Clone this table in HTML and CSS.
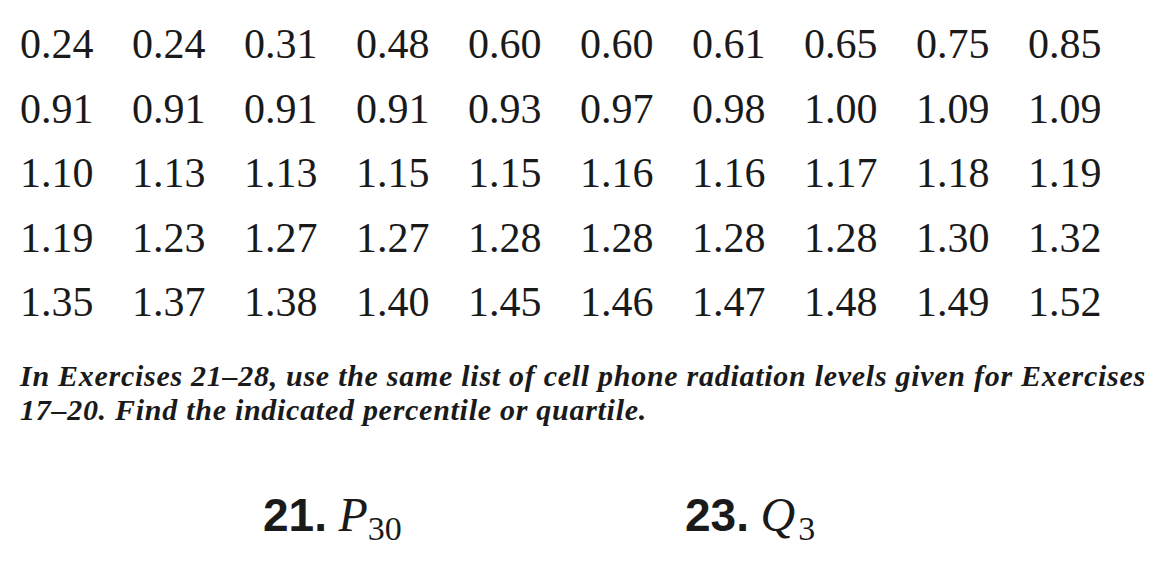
FILE: index.html
```html
<!DOCTYPE html>
<html lang="en">
<head>
    <meta charset="UTF-8">
    <title>Percentiles and Quartiles</title>
    <link rel="stylesheet" href="styles.css">
</head>
<body>
    <div class="page">
        <div class="data-table">
            <span>0.24</span><span>0.24</span><span>0.31</span><span>0.48</span><span>0.60</span>
            <span>0.60</span><span>0.61</span><span>0.65</span><span>0.75</span><span>0.85</span>
            <span>0.91</span><span>0.91</span><span>0.91</span><span>0.91</span><span>0.93</span>
            <span>0.97</span><span>0.98</span><span>1.00</span><span>1.09</span><span>1.09</span>
            <span>1.10</span><span>1.13</span><span>1.13</span><span>1.15</span><span>1.15</span>
            <span>1.16</span><span>1.16</span><span>1.17</span><span>1.18</span><span>1.19</span>
            <span>1.19</span><span>1.23</span><span>1.27</span><span>1.27</span><span>1.28</span>
            <span>1.28</span><span>1.28</span><span>1.28</span><span>1.30</span><span>1.32</span>
            <span>1.35</span><span>1.37</span><span>1.38</span><span>1.40</span><span>1.45</span>
            <span>1.46</span><span>1.47</span><span>1.48</span><span>1.49</span><span>1.52</span>
        </div>
        <p class="instructions">In Exercises 21–28, use the same list of cell phone radiation levels given for Exercises 17–20. Find the indicated percentile or quartile.</p>
        <div class="exercises">
            <div class="exercise"><span class="num">21.</span> <span class="var">P</span><sub>30</sub></div>
            <div class="exercise"><span class="num">23.</span> <span class="var">Q</span><sub class="wide">3</sub></div>
        </div>
    </div>
</body>
</html>
```

FILE: styles.css
```css
body {
    margin: 0;
    background-color: #ffffff;
    color: #1a1a1a;
    font-family: "Liberation Serif", "Times New Roman", serif;
}
.page {
    padding: 12px 0 0 20px;
}
.data-table {
    display: grid;
    grid-template-columns: repeat(10, 112px);
    font-size: 42px;
    line-height: 64.5px;
}
.instructions {
    margin: 24px 0 0;
    width: 1140px;
    font-size: 30px;
    line-height: 34px;
    letter-spacing: 0.72px;
    font-weight: bold;
    font-style: italic;
}
.exercises {
    display: grid;
    grid-template-columns: 422px auto;
    margin-top: 60px;
    padding-left: 243px;
}
.exercise {
    font-size: 46px;
    line-height: 56px;
}
.exercise .num {
    font-family: "Liberation Sans", Arial, sans-serif;
    font-weight: bold;
}
.exercise .var {
    font-size: 48px;
    font-style: italic;
}
.exercise sub {
    font-size: 34px;
    vertical-align: -9px;
    line-height: 0;
}
.exercise sub.wide {
    margin-left: 3px;
}
```
